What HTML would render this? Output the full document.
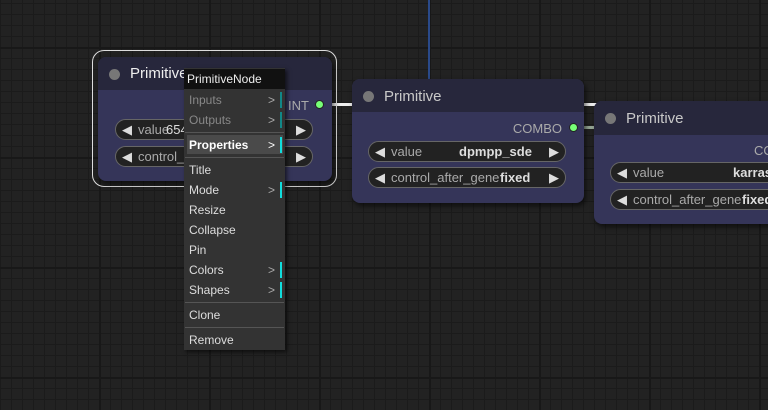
<!DOCTYPE html>
<html><head><meta charset="utf-8"><style>
*{margin:0;padding:0;box-sizing:border-box}
body{width:768px;height:410px;overflow:hidden;position:relative;font-family:"Liberation Sans",sans-serif;
background-color:#222;
background-image:
linear-gradient(to right,#181818 2px,transparent 2px),
linear-gradient(to bottom,#181818 2px,transparent 2px),
linear-gradient(to right,#1b1b1b 1px,transparent 1px),
linear-gradient(to bottom,#1b1b1b 1px,transparent 1px);
background-size:110px 110px,110px 110px,11px 11px,11px 11px;
background-position:99px 0,0 47px,0 0,0 3px;}
.a{position:absolute}
.node{position:absolute;background:#353559;border-radius:8px;box-shadow:2px 3px 6px rgba(0,0,0,.6);overflow:hidden}
.tb{position:absolute;left:0;right:0;top:0;background:#27273c;color:#c8c8c8;font-size:15px}
.tb .d{position:absolute;left:11px;width:11px;height:11px;border-radius:50%;background:#777}
.tb span{position:absolute;left:32px}
.pill{position:absolute;height:21px;background:#222;border:1px solid #666;border-radius:11px;color:#aaa;font-size:13px;line-height:19px}
.pill .l{position:absolute;left:6px;font-size:13px;color:#ddd}
.pill .r{position:absolute;right:6px;font-size:13px;color:#ddd}
.pill .t{position:absolute;left:22px}
.pill .v{position:absolute;color:#ddd;font-weight:bold}
.out{position:absolute;color:#aaa;font-size:13px}
.dot{position:absolute;width:9px;height:9px;border-radius:50%;background:#7f7;border:1px solid #222}
.menu{position:absolute;left:184px;top:68px;width:101px;height:282px;background:#333;box-shadow:2px 2px 4px rgba(0,0,0,.6)}
.mi{position:absolute;left:5px;font-size:12px;color:#ddd;height:20px;line-height:20px;width:94px}
.mi.dis{color:#888}
.mi .g{position:absolute;right:8px;color:#aaa}
.bar{position:absolute;right:1px;top:2px;width:2px;height:16px;background:#1dd}
.mi.dis .bar{background:#188}
.sep{position:absolute;left:1px;width:99px;height:1px;background:#555}
</style></head><body>
<div class="a" style="left:428px;top:0;width:2px;height:80px;background:#2a4a8a"></div>
<div class="a" style="left:325px;top:103px;width:28px;height:3px;background:#eee"></div>
<div class="a" style="left:583px;top:103px;width:15px;height:3px;background:#eee"></div>
<div class="a" style="left:578px;top:126px;width:18px;height:3px;background:#9a9"></div>

<div class="a" style="left:92px;top:50px;width:245px;height:137px;border:1.5px solid #ddd;border-radius:12px"></div>
<div class="node" style="left:98px;top:57px;width:234px;height:124px">
 <div class="tb" style="height:33px"><div class="d" style="top:12px"></div><span style="top:8px;color:#eee">Primitive</span></div>
 <div class="out" style="right:23px;top:41px">INT</div>
 <div class="dot" style="right:8px;top:43px"></div>
 <div class="pill" style="left:17px;top:62px;width:198px"><span class="l">◀</span><span class="t">value</span><span class="v" style="left:50px;font-weight:normal">654</span><span class="r">▶</span></div>
 <div class="pill" style="left:17px;top:89px;width:198px"><span class="l">◀</span><span class="t">control_</span><span class="r">▶</span></div>
</div>

<div class="node" style="left:352px;top:79px;width:232px;height:124px">
 <div class="tb" style="height:33px"><div class="d" style="top:12px"></div><span style="top:9px">Primitive</span></div>
 <div class="out" style="right:22px;top:42px">COMBO</div>
 <div class="dot" style="right:6px;top:44px"></div>
 <div class="pill" style="left:16px;top:62px;width:198px"><span class="l">◀</span><span class="t">value</span><span class="v" style="left:90px">dpmpp_sde</span><span class="r">▶</span></div>
 <div class="pill" style="left:16px;top:88px;width:198px"><span class="l">◀</span><span class="t">control_after_generate</span><span class="v" style="left:130px;background:#222;padding-left:1px">fixed</span><span class="r">▶</span></div>
</div>

<div class="node" style="left:594px;top:101px;width:190px;height:123px">
 <div class="tb" style="height:34px"><div class="d" style="top:12px"></div><span style="top:9px">Primitive</span></div>
 <div class="out" style="left:160px;top:42px">COMBO</div>
 <div class="pill" style="left:16px;top:61px;width:200px"><span class="l">◀</span><span class="t">value</span><span class="v" style="left:122px">karras</span></div>
 <div class="pill" style="left:16px;top:88px;width:200px"><span class="l">◀</span><span class="t">control_after_generate</span><span class="v" style="left:130px;background:#222;padding-left:1px">fixed</span></div>
</div>

<div class="menu">
 <div class="a" style="left:0;top:1px;width:101px;height:20px;background:#111;color:#eee;font-size:12px;line-height:20px;padding-left:3px">PrimitiveNode</div>
 <div class="mi dis" style="top:22px">Inputs<span class="g">&gt;</span><div class="bar"></div></div>
 <div class="mi dis" style="top:42px">Outputs<span class="g">&gt;</span><div class="bar"></div></div>
 <div class="sep" style="top:64px"></div>
 <div class="a" style="left:3px;top:67px;width:96px;height:19px;background:#4a4a4a"></div>
 <div class="mi" style="top:67px;font-weight:bold;color:#fff">Properties<span class="g" style="color:#fff;font-weight:normal">&gt;</span><div class="bar"></div></div>
 <div class="sep" style="top:89px"></div>
 <div class="mi" style="top:92px">Title</div>
 <div class="mi" style="top:112px">Mode<span class="g">&gt;</span><div class="bar"></div></div>
 <div class="mi" style="top:132px">Resize</div>
 <div class="mi" style="top:152px">Collapse</div>
 <div class="mi" style="top:172px">Pin</div>
 <div class="mi" style="top:192px">Colors<span class="g">&gt;</span><div class="bar"></div></div>
 <div class="mi" style="top:212px">Shapes<span class="g">&gt;</span><div class="bar"></div></div>
 <div class="sep" style="top:234px"></div>
 <div class="mi" style="top:237px">Clone</div>
 <div class="sep" style="top:259px"></div>
 <div class="mi" style="top:262px">Remove</div>
</div>
</body></html>
